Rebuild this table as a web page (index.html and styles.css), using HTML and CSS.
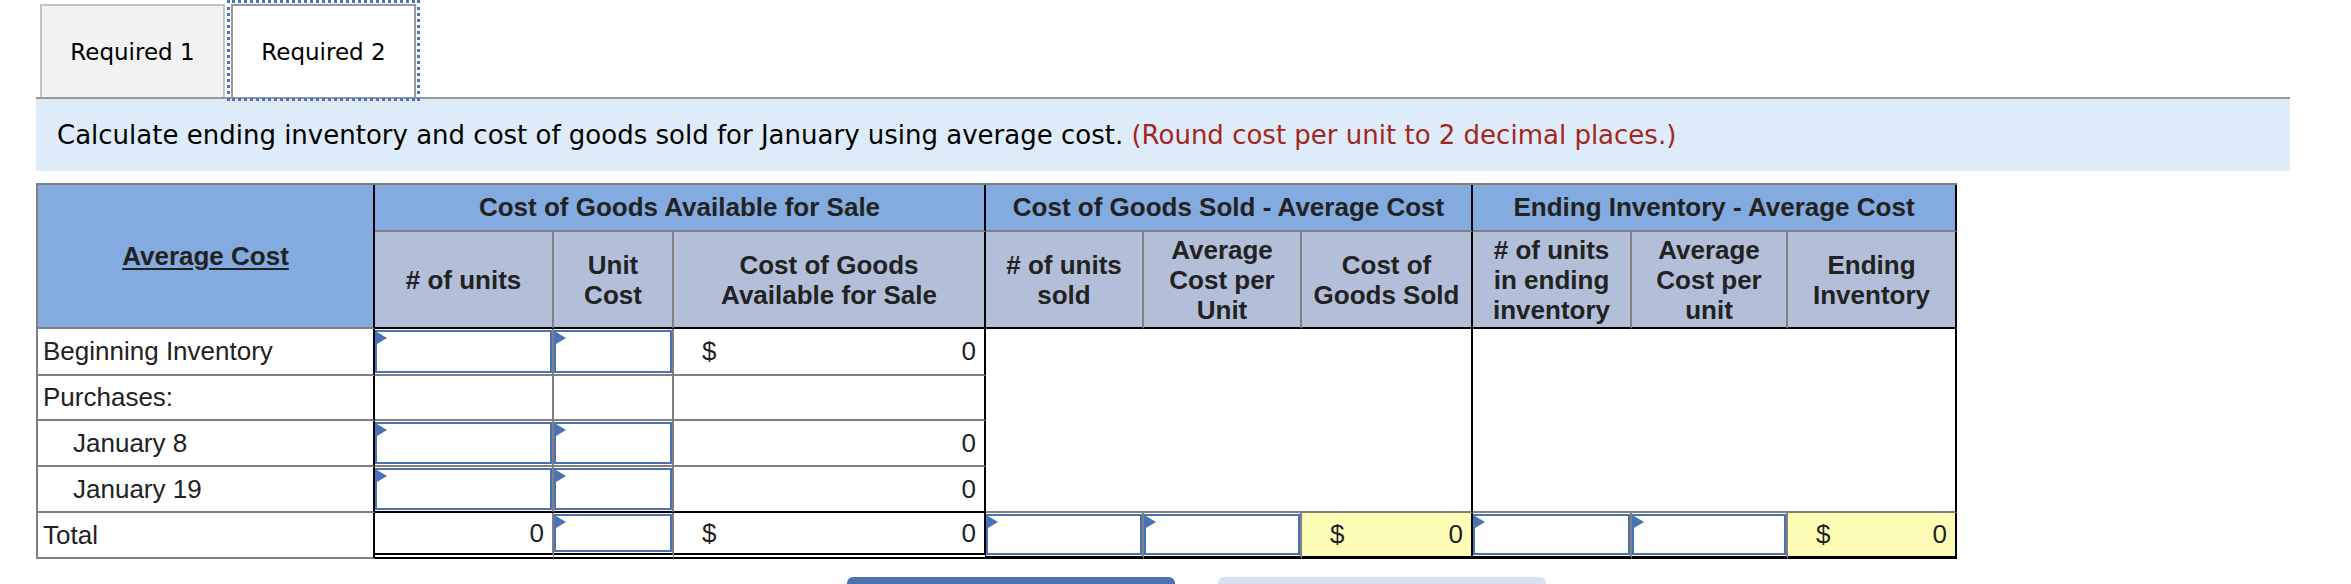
FILE: index.html
```html
<!DOCTYPE html>
<html lang="en">
<head>
<meta charset="utf-8">
<title>Average Cost</title>
<link rel="stylesheet" href="styles.css">
</head>
<body>
<div class="page">
  <div class="tabs">
    <div class="tab tab-plain">Required 1</div>
    <div class="tab tab-active">Required 2</div>
  </div>
  <div class="instructions">
    <p class="instructions-text">Calculate ending inventory and cost of goods sold for January using average cost. <span class="hint">(Round cost per unit to 2 decimal places.)</span></p>
  </div>

  <div class="sheet">
    <!-- header row 1 -->
    <div class="cell h1 title-cell br-black"><span class="u">Average Cost</span></div>
    <div class="cell h1 span3 br-black">Cost of Goods Available for Sale</div>
    <div class="cell h1 span3 br-black">Cost of Goods Sold - Average Cost</div>
    <div class="cell h1 span3 br-black">Ending Inventory - Average Cost</div>
    <!-- header row 2 -->
    <div class="cell h2 bb-black">#&nbsp;of units</div>
    <div class="cell h2 bb-black">Unit<br>Cost</div>
    <div class="cell h2 bb-black br-black">Cost of Goods<br>Available for Sale</div>
    <div class="cell h2 bb-black">#&nbsp;of units<br>sold</div>
    <div class="cell h2 bb-black">Average<br>Cost per<br>Unit</div>
    <div class="cell h2 bb-black br-black">Cost of<br>Goods Sold</div>
    <div class="cell h2 bb-black">#&nbsp;of units<br>in ending<br>inventory</div>
    <div class="cell h2 bb-black">Average<br>Cost per<br>unit</div>
    <div class="cell h2 bb-black br-black">Ending<br>Inventory</div>

    <!-- Beginning Inventory -->
    <div class="cell label br-black">Beginning Inventory</div>
    <div class="cell input-cell"><div class="inp"></div></div>
    <div class="cell input-cell"><div class="inp"></div></div>
    <div class="cell money br-black"><span>$</span><span>0</span></div>
    <div class="cell merged br-black"></div>
    <div class="cell merged br-black"></div>

    <!-- Purchases -->
    <div class="cell label br-black">Purchases:</div>
    <div class="cell"></div>
    <div class="cell"></div>
    <div class="cell br-black"></div>

    <!-- January 8 -->
    <div class="cell label indent br-black">January 8</div>
    <div class="cell input-cell"><div class="inp"></div></div>
    <div class="cell input-cell"><div class="inp"></div></div>
    <div class="cell num br-black">0</div>

    <!-- January 19 -->
    <div class="cell label indent br-black">January 19</div>
    <div class="cell input-cell bb-black"><div class="inp"></div></div>
    <div class="cell input-cell bb-black"><div class="inp"></div></div>
    <div class="cell num br-black bb-black">0</div>

    <!-- Total -->
    <div class="cell label br-black">Total</div>
    <div class="cell num bb-double">0</div>
    <div class="cell input-cell bb-double"><div class="inp"></div></div>
    <div class="cell money br-black bb-double"><span>$</span><span>0</span></div>
    <div class="cell input-cell bb-thick"><div class="inp"></div></div>
    <div class="cell input-cell bb-thick"><div class="inp"></div></div>
    <div class="cell money result br-black bb-thick"><span>$</span><span>0</span></div>
    <div class="cell input-cell bb-thick"><div class="inp"></div></div>
    <div class="cell input-cell bb-thick"><div class="inp"></div></div>
    <div class="cell money result br-black bb-thick"><span>$</span><span>0</span></div>
  </div>

  <div class="actions">
    <div class="btn btn-primary"></div>
    <div class="btn btn-secondary"></div>
  </div>
</div>
<div class="floating-card"></div>
</body>
</html>
```

FILE: styles.css
```css
* {
  box-sizing: border-box;
}

html,
body {
  height: 584px;
}

body {
  margin: 0;
  background: #ffffff;
  font-family: "Liberation Sans", Arial, sans-serif;
  color: #1f1f1f;
  overflow: hidden;
}

.page {
  width: 2290px;
  padding-left: 36px;
}

/* Tabs */
.tabs {
  display: flex;
  height: 99px;
  padding-top: 4px;
  padding-left: 4px;
  border-bottom: 2px solid #999999;
}

.tab {
  width: 185px;
  height: 93px;
  display: flex;
  align-items: center;
  justify-content: center;
  font-family: "DejaVu Sans", Verdana, sans-serif;
  font-size: 23px;
  color: #000000;
}

.tab-plain {
  background: #f2f2f2;
  border: 2px solid #c4c4c4;
  border-bottom: none;
}

.tab-active {
  margin-left: 6px;
  background: #ffffff;
  border: 2px solid #999999;
  border-bottom: none;
  outline: 3px dotted #4a72c2;
  outline-offset: 1px;
}

/* Instruction band */
.instructions {
  height: 72px;
  background: #deebf8;
  display: flex;
  align-items: center;
  padding-left: 21px;
}

.instructions-text {
  margin: 0;
  font-family: "DejaVu Sans", Verdana, sans-serif;
  font-size: 26px;
  color: #000000;
}

.hint {
  color: #a3261f;
}

/* Worksheet grid */
.sheet {
  margin-top: 12px;
  width: 1921px;
  display: grid;
  grid-template-columns: 337px 179px 120px 312px 158px 158px 171px 159px 156px 169px;
  grid-template-rows: 47px 97px 47px 45px 46px 46px 46px;
  border-top: 2px solid #808080;
  border-left: 2px solid #808080;
}

.cell {
  border-right: 2px solid #808080;
  border-bottom: 2px solid #808080;
  font-size: 26px;
  color: #222222;
  display: flex;
  align-items: center;
  min-width: 0;
}

.br-black {
  border-right-color: #000000;
}

.bb-black {
  border-bottom-color: #000000;
}

.bb-double {
  border-bottom: 6px double #000000;
}

.bb-thick {
  border-bottom: 3px solid #000000;
}

.h1 {
  background: #83abdf;
  font-weight: bold;
  justify-content: center;
  text-align: center;
}

.title-cell {
  grid-row: span 2;
}

.u {
  text-decoration: underline;
  text-underline-offset: 3px;
}

.span3 {
  grid-column: span 3;
}

.h2 {
  background: #b3bfd9;
  font-weight: bold;
  justify-content: center;
  text-align: center;
  line-height: 30px;
}

.label {
  padding-left: 5px;
}

.indent {
  padding-left: 35px;
}

.merged {
  grid-column: span 3;
  grid-row: span 4;
  background: #ffffff;
}

.num {
  justify-content: flex-end;
  padding-right: 8px;
}

.money {
  justify-content: space-between;
  padding: 0 8px 0 28px;
}

.result {
  background: #fefdb6;
}

.input-cell {
  padding: 1px 0 1px 0;
  align-items: stretch;
}

.inp {
  flex: 1;
  position: relative;
  border: 2px solid #4a72b4;
  background: #ffffff;
}

.inp::before {
  content: "";
  position: absolute;
  left: 0;
  top: 0;
  border-top: 6px solid transparent;
  border-bottom: 6px solid transparent;
  border-left: 10px solid #4a72b4;
}

/* Bottom buttons */
.actions {
  display: flex;
  gap: 43px;
  margin-top: 18px;
  padding-left: 811px;
}

.btn {
  width: 328px;
  height: 7px;
  border-radius: 6px 6px 0 0;
}

.btn-primary {
  background: #4b73b3;
}

.btn-secondary {
  background: #d8e2ef;
}

.floating-card {
  position: absolute;
  right: 0;
  top: 577px;
  width: 188px;
  height: 7px;
  background: #ffffff;
  border-radius: 10px 0 0 0;
  box-shadow: 0 0 90px rgba(0, 0, 0, 0.13);
}
```
